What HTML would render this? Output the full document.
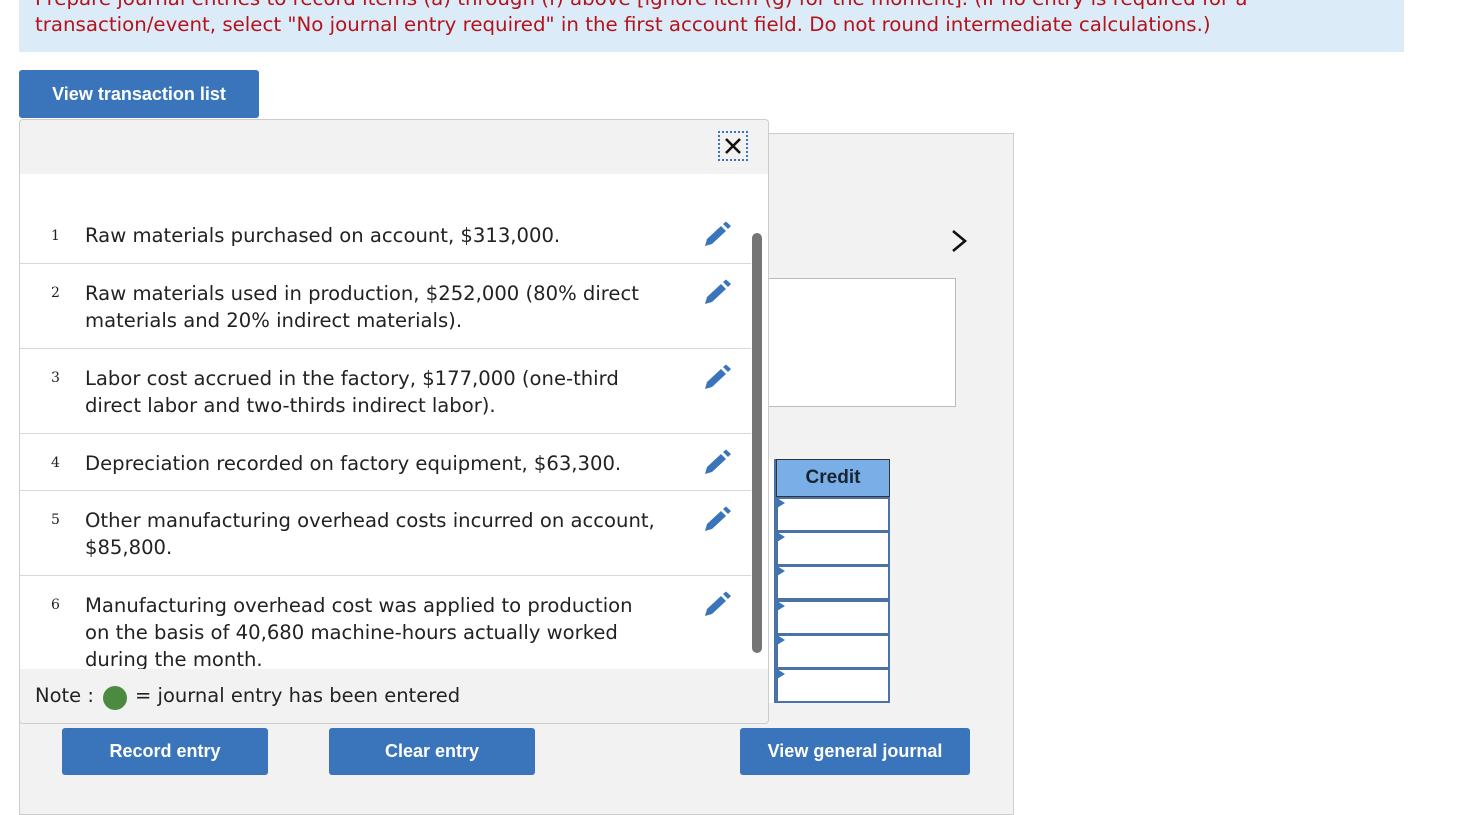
<!DOCTYPE html>
<html><head><meta charset="utf-8"><style>
body{margin:0;width:1459px;height:789px;background:#fff;position:relative;overflow:hidden;font-family:"DejaVu Sans","Liberation Sans",sans-serif;}
.abs{position:absolute;}
.hdr{left:19px;top:0;width:1385px;height:52px;background:#dcebf8;}
.hdr div{position:absolute;left:16px;font-size:19.8px;color:#b3141c;white-space:nowrap;}
.btn{position:absolute;background:#3a75bb;color:#fff;font-family:"Liberation Sans",Arial,sans-serif;font-weight:bold;font-size:18px;border-radius:3px;display:flex;align-items:center;justify-content:center;}
.panel{left:19px;top:133px;width:993px;height:680px;background:#f2f2f2;border:1px solid #ccc;}
.pop{left:19px;top:119px;width:748px;height:603px;background:#fff;border:1px solid #ccc;border-radius:4px;overflow:hidden;}
.row{position:absolute;left:0;width:731px;border-bottom:1px solid #d9d9d9;}
.num{position:absolute;left:31px;font-family:"DejaVu Serif","Liberation Serif",serif;font-size:14px;color:#222;}
.txt{position:absolute;left:65px;font-size:19.6px;line-height:27px;color:#222;white-space:nowrap}
.pen{position:absolute;left:684px;}
.cell{position:absolute;left:776px;width:110px;height:31px;border:2px solid #4a72a6;background:#fff;}
.cell:before{content:"";position:absolute;left:-1px;top:-1px;border-left:8px solid #3a75bb;border-top:5px solid transparent;border-bottom:5px solid transparent;}
</style></head><body>
<div class="abs hdr">
<div style="top:-13px">Prepare journal entries to record items (a) through (f) above [ignore item (g) for the moment]. <span>(If no entry is required for a</span></div>
<div style="top:13px">transaction/event, select "No journal entry required" in the first account field. Do not round intermediate calculations.)</div>
</div>
<div class="btn" style="left:19px;top:70px;width:240px;height:48px;">View transaction list</div>
<div class="abs panel"></div>
<svg class="abs" style="left:950px;top:228px" width="20" height="26" viewBox="0 0 20 26"><polyline points="3,3 15,13 3,23" fill="none" stroke="#111" stroke-width="2.6"/></svg>
<div class="abs" style="left:767px;top:278px;width:187px;height:127px;background:#fff;border:1px solid #bbb;"></div>
<div class="abs" style="left:768px;top:459px;width:6px;height:244px;background:#fff;border-right:3px solid #4a72a6"></div>
<div class="abs" style="left:776px;top:459px;width:112px;height:36px;background:#7aaee6;border:1px solid #333;font-family:'Liberation Sans',Arial,sans-serif;font-weight:bold;font-size:19px;color:#1a2330;text-align:center;line-height:36px;">Credit</div>
<div class="cell" style="top:497px"></div>
<div class="cell" style="top:531px"></div>
<div class="cell" style="top:565px"></div>
<div class="cell" style="top:600px"></div>
<div class="cell" style="top:634px"></div>
<div class="cell" style="top:668px"></div>
<div class="abs pop">
<div class="abs" style="left:0;top:0;width:748px;height:54px;background:#f2f2f2;"></div>
<div class="abs" style="left:698px;top:11px;width:26px;height:26px;border:2px dotted #3a75bb;">
<svg width="26" height="26" viewBox="0 0 26 26"><path d="M6 6 L20 20 M20 6 L6 20" stroke="#111" stroke-width="2.6"/></svg></div>
<div class="row" style="top:54px;height:89px"><span class="num" style="top:54px">1</span><span class="txt" style="top:48px">Raw materials purchased on account, $313,000.</span></div>
<div class="row" style="top:144px;height:84px"><span class="num" style="top:21px">2</span><span class="txt" style="top:16px">Raw materials used in production, $252,000 (80% direct<br>materials and 20% indirect materials).</span></div>
<div class="row" style="top:229px;height:84px"><span class="num" style="top:21px">3</span><span class="txt" style="top:16px">Labor cost accrued in the factory, $177,000 (one-third<br>direct labor and two-thirds indirect labor).</span></div>
<div class="row" style="top:314px;height:56px"><span class="num" style="top:21px">4</span><span class="txt" style="top:16px">Depreciation recorded on factory equipment, $63,300.</span></div>
<div class="row" style="top:371px;height:84px"><span class="num" style="top:21px">5</span><span class="txt" style="top:16px">Other manufacturing overhead costs incurred on account,<br>$85,800.</span></div>
<div class="row" style="top:456px;height:120px;border:0"><span class="num" style="top:21px">6</span><span class="txt" style="top:16px">Manufacturing overhead cost was applied to production<br>on the basis of 40,680 machine-hours actually worked<br>during the month.</span></div>
<svg class="pen" style="top:101px" width="28" height="26" viewBox="0 0 28 26"><path d="M1 25 L3 18 L17 5 L22 10 L8 23 Z" fill="#3a75bb"/><path d="M19 3 L22 0.5 L27 5 L24 8 Z" fill="#3a75bb"/></svg>
<svg class="pen" style="top:159px" width="28" height="26" viewBox="0 0 28 26"><path d="M1 25 L3 18 L17 5 L22 10 L8 23 Z" fill="#3a75bb"/><path d="M19 3 L22 0.5 L27 5 L24 8 Z" fill="#3a75bb"/></svg>
<svg class="pen" style="top:244px" width="28" height="26" viewBox="0 0 28 26"><path d="M1 25 L3 18 L17 5 L22 10 L8 23 Z" fill="#3a75bb"/><path d="M19 3 L22 0.5 L27 5 L24 8 Z" fill="#3a75bb"/></svg>
<svg class="pen" style="top:329px" width="28" height="26" viewBox="0 0 28 26"><path d="M1 25 L3 18 L17 5 L22 10 L8 23 Z" fill="#3a75bb"/><path d="M19 3 L22 0.5 L27 5 L24 8 Z" fill="#3a75bb"/></svg>
<svg class="pen" style="top:386px" width="28" height="26" viewBox="0 0 28 26"><path d="M1 25 L3 18 L17 5 L22 10 L8 23 Z" fill="#3a75bb"/><path d="M19 3 L22 0.5 L27 5 L24 8 Z" fill="#3a75bb"/></svg>
<svg class="pen" style="top:471px" width="28" height="26" viewBox="0 0 28 26"><path d="M1 25 L3 18 L17 5 L22 10 L8 23 Z" fill="#3a75bb"/><path d="M19 3 L22 0.5 L27 5 L24 8 Z" fill="#3a75bb"/></svg>
<div class="abs" style="left:732px;top:113px;width:10px;height:420px;background:#757575;border-radius:5px;"></div>
<div class="abs" style="left:0;top:549px;width:748px;height:54px;background:#f2f2f2;border-bottom:1px solid #ccc;">
<span class="abs" style="left:15px;top:15px;font-size:19.5px;color:#222;">Note :</span>
<span class="abs" style="left:83px;top:17px;width:24px;height:24px;border-radius:50%;background:#4b8a3f;"></span>
<span class="abs" style="left:115px;top:15px;font-size:19.5px;color:#222;white-space:nowrap">= journal entry has been entered</span>
</div>
</div>
<div class="btn" style="left:62px;top:728px;width:206px;height:47px;">Record entry</div>
<div class="btn" style="left:329px;top:728px;width:206px;height:47px;">Clear entry</div>
<div class="btn" style="left:740px;top:728px;width:230px;height:47px;">View general journal</div>
</body></html>
